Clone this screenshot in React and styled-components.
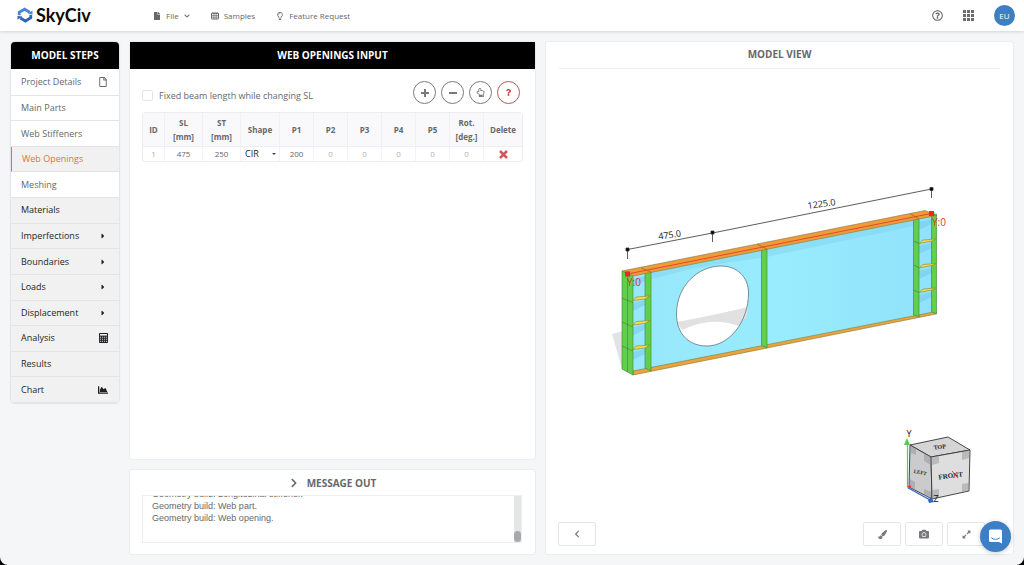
import React from "react";
import styled, { createGlobalStyle, css } from "styled-components";
import {
  FaFile,
  FaRegFile,
  FaChevronDown,
  FaChevronLeft,
  FaChevronRight,
  FaRegLightbulb,
  FaChartArea,
  FaRegHandPointUp,
  FaQuestion,
  FaCaretRight,
  FaPaintBrush,
  FaCamera,
  FaExpandAlt,
  FaRegQuestionCircle,
} from "react-icons/fa";

const GlobalStyle = createGlobalStyle`
  *, *::before, *::after { box-sizing: border-box; }
  body {
    margin: 0;
    background: #000;
    color: #66686b;
    font-family: "Open Sans", "Noto Sans", sans-serif;
    font-size: 9px;
    line-height: 14px;
  }
  button, input, select { font: inherit; color: inherit; }
  a { color: inherit; text-decoration: none; }
`;

const Page = styled.div`
  min-height: 100vh;
  display: flex;
  flex-direction: column;
  background: #f5f6f8;
  border-radius: 0 0 8px 8px;
`;

const Header = styled.header`
  height: 31px;
  padding: 0 9px 0 17px;
  display: flex;
  align-items: center;
  background: #fff;
  box-shadow: 0 1px 3px rgba(0, 0, 0, 0.14);
`;

const Brand = styled.a`
  width: 136px;
  display: flex;
  align-items: center;
  gap: 3px;
  padding-bottom: 2px;
  color: #0b0b0b;
  font-family: Lato, sans-serif;
  font-size: 18px;
  font-weight: 700;
  line-height: 24px;
`;

const TopNav = styled.nav`
  flex: 1;
  display: flex;
  align-items: center;
  gap: 21px;
  font-size: 8px;
`;

const NavLink = styled.a`
  display: flex;
  align-items: center;
  gap: 5px;
`;

const HeaderTools = styled.div`
  display: flex;
  align-items: center;
  gap: 20px;
`;

const PlainButton = styled.button`
  padding: 0;
  border: 0;
  background: none;
  display: flex;
  cursor: pointer;
`;

const Avatar = styled.button`
  width: 21px;
  height: 21px;
  padding: 0;
  border: 0;
  border-radius: 50%;
  background: #3d7fc1;
  color: #fff;
  font-size: 8px;
`;

const Workspace = styled.main`
  flex: 1;
  display: grid;
  grid-template-columns: 108px minmax(0, 405fr) minmax(0, 467fr);
  gap: 11px;
  padding: 11px;
`;

const Card = styled.section`
  background: #fff;
  border-radius: 2px;
  box-shadow: 0 0 2px rgba(0, 0, 0, 0.14);
  display: flex;
  flex-direction: column;
  ${(p) => p.$grow && css`flex: 1;`}
`;

const Column = styled.div`
  display: flex;
  flex-direction: column;
  gap: 11px;
`;

const PanelTitle = styled.h2`
  margin: 0;
  height: ${(p) => (p.$compact ? 25 : 27)}px;
  padding-bottom: ${(p) => (p.$compact ? 0 : 2)}px;
  display: flex;
  align-items: center;
  justify-content: center;
  gap: 8px;
  font-size: 10px;
  font-weight: 700;
  ${(p) =>
    p.$dark &&
    css`
      background: #000;
      color: #fff;
    `}
`;

const Steps = styled.nav`
  align-self: start;
  border-radius: 4px;
  overflow: hidden;
  box-shadow: 0 0 2px rgba(0, 0, 0, 0.25);
`;

const StepList = styled.ul`
  margin: 0;
  padding: 1px 0 0;
  list-style: none;
  display: grid;
  grid-template-rows: repeat(13, minmax(0, 1fr));
  height: 334px;
  background: #fff;
`;

const Step = styled.a`
  height: 100%;
  padding: 0 11px 0 10px;
  display: flex;
  align-items: center;
  justify-content: space-between;
  border-bottom: 1px solid #e3e4e6;
  background: ${(p) => (p.$sub ? "#fff" : "#f1f1f2")};
  color: ${(p) => (p.$sub ? "#66686b" : "#1d1e20")};
  ${(p) =>
    p.$active &&
    css`
      background: #f2f1f1;
      color: #dd7443;
      border-left: 1px solid #dd7443;
    `}
`;

const StepIcon = styled.span`
  width: 10px;
  display: flex;
  justify-content: center;
`;

const InputBody = styled.div`
  flex: 1;
  padding: 12px 13px 12px 12px;
`;

const Toolbar = styled.div`
  display: flex;
  align-items: center;
  justify-content: space-between;
  padding-right: 2px;
  margin-bottom: 8px;
`;

const CheckLabel = styled.label`
  display: flex;
  align-items: center;
  gap: 6px;
  padding-top: 6px;
`;

const CheckBox = styled.input`
  appearance: none;
  width: 11px;
  height: 11px;
  margin: 0;
  border: 1px solid #e4e5e8;
  border-radius: 2px;
  background: #fff;
`;

const RoundGroup = styled.div`
  display: flex;
  gap: 5px;
`;

const RoundButton = styled.button`
  width: 23px;
  height: 23px;
  padding: 0;
  display: flex;
  align-items: center;
  justify-content: center;
  border: 1px solid currentColor;
  border-radius: 50%;
  background: #fff;
  color: ${(p) => (p.$danger ? "#cc4a50" : "#77797c")};
`;

const Table = styled.table`
  width: 100%;
  table-layout: fixed;
  border-collapse: separate;
  border-spacing: 0;
  border: 1px solid #ededf0;
  border-radius: 3px;
  text-align: center;
`;

const HeadCell = styled.th`
  height: 34px;
  padding: 0;
  background: #f9f9fb;
  border-bottom: 1px solid #efeff2;
  border-right: 1px solid #f1f1f4;
  font-size: 8px;
  &:last-child { border-right: 0; }
`;

const Cell = styled.td`
  height: 14px;
  padding: 0;
  border-right: 1px solid #f4f4f6;
  line-height: 14px;
  font-size: 8px;
  color: ${(p) => (p.$muted ? "#b0b1b4" : "#66686b")};
  &:last-child { border-right: 0; }
`;

const ShapeBox = styled.span`
  display: flex;
  align-items: center;
  padding: 0 3px 0 4px;
  color: #222;
`;

const ShapeSelect = styled.select`
  appearance: none;
  flex: 1;
  min-width: 0;
  height: 14px;
  padding: 0;
  border: 0;
  background: none;
  font-size: 9px;
`;

const DeleteButton = styled(PlainButton)`
  margin: 0 auto;
  color: #cd5a5e;
`;

const MessageBody = styled.div`
  margin: 0 13px 11px 12px;
  height: 48px;
  display: flex;
  border: 1px solid #eeeef0;
`;

const MessageLog = styled.div`
  flex: 1;
  padding: 0 9px 18px;
  overflow: hidden;
  display: flex;
  flex-direction: column;
  justify-content: flex-end;
  font-family: "Liberation Sans", sans-serif;
  font-size: 9px;
  line-height: 12px;
`;

const LogLine = styled.div`
  flex: none;
`;

const ScrollTrack = styled.div`
  width: 7px;
  display: flex;
  align-items: flex-end;
  background: #e4e5e7;
`;

const ScrollThumb = styled.div`
  width: 7px;
  height: 11px;
  border-radius: 4px;
  background: #a8a9ab;
`;

const ViewTitle = styled(PanelTitle)`
  margin: 0 13px;
  border-bottom: 1px solid #efeff1;
`;

const ModelCanvas = styled.svg`
  display: block;
  width: 100%;
  flex: 1;
  min-height: 0;
`;

const ViewFooter = styled.div`
  display: flex;
  justify-content: space-between;
  padding: 0 28px 8px 12px;
`;

const ViewTools = styled.div`
  display: flex;
  gap: 4px;
`;

const ViewButton = styled.button`
  width: 38px;
  height: 24px;
  padding: 0;
  display: flex;
  align-items: center;
  justify-content: center;
  border: 1px solid #e6e6e9;
  border-radius: 2px;
  background: #fff;
  color: #77797c;
`;

const ChatButton = styled.button`
  position: fixed;
  right: 13px;
  bottom: 13px;
  width: 31px;
  height: 31px;
  padding: 0;
  display: flex;
  align-items: center;
  justify-content: center;
  border: 0;
  border-radius: 50%;
  background: #3d7fc4;
  box-shadow: 0 1px 5px rgba(0, 0, 0, 0.2);
`;

const Logo = () => (
  <svg width="16" height="18" viewBox="0 0 16 18" aria-hidden="true">
    <path d="M2.200 9.200V6.400L7.600 3.200L12.600 6.200" fill="none" stroke="#4a86cf" strokeWidth="2.800" />
    <path d="M13.800 8.800V11.800L8.400 15L3.400 12" fill="none" stroke="#2f63b3" strokeWidth="2.800" />
    <path d="M15.500 4.500V8.200L10.500 7.600Z" fill="#4a86cf" />
    <path d="M0.500 13.700V10L5.500 10.600Z" fill="#2f63b3" />
  </svg>
);

const GridIcon = () => (
  <svg width="11" height="11" viewBox="0 0 11 11" fill="#6b6d70" aria-hidden="true">
    {[0, 4, 8].map((y) => [0, 4, 8].map((x) => <rect key={`${x}-${y}`} x={x} y={y} width="3" height="3" />))}
  </svg>
);

const TableIcon = () => (
  <svg width="8" height="8" viewBox="0 0 8 8" fill="none" stroke="currentColor" aria-hidden="true">
    <rect x="0.500" y="1" width="7" height="6" rx="0.500" />
    <path d="M0.500 1.500H7.500M0.500 3.400H7.500M0.500 5.200H7.500M2.900 1V7M5.200 1V7" strokeWidth="0.700" />
  </svg>
);

const CalculatorIcon = () => (
  <svg width="9" height="10" viewBox="0 0 9 10" aria-hidden="true">
    <rect width="9" height="10" rx="0.800" fill="currentColor" />
    <rect x="1" y="1" width="7" height="1.600" fill="#f1f1f2" />
    <path d="M0.800 4.200H8.200M0.800 6.200H8.200M0.800 8.300H8.200" stroke="#f1f1f2" strokeWidth="0.900" strokeDasharray="1.200 0.850" />
  </svg>
);

const SignIcon = ({ plus }) => (
  <svg width="8" height="8" viewBox="0 0 8 8" stroke="currentColor" strokeWidth="2" aria-hidden="true">
    <path d={plus ? "M0 4H8M4 0V8" : "M0 4H8"} />
  </svg>
);

const CrossIcon = () => (
  <svg width="9" height="9" viewBox="0 0 9 9" aria-hidden="true">
    <path d="M1 1L8 8M8 1L1 8" stroke="currentColor" strokeWidth="2.600" />
  </svg>
);

const steps = [
  { name: "Project Details", sub: true, icon: <FaRegFile size={10} /> },
  { name: "Main Parts", sub: true },
  { name: "Web Stiffeners", sub: true },
  { name: "Web Openings", sub: true, active: true },
  { name: "Meshing", sub: true },
  { name: "Materials" },
  { name: "Imperfections", icon: <FaCaretRight size={8} /> },
  { name: "Boundaries", icon: <FaCaretRight size={8} /> },
  { name: "Loads", icon: <FaCaretRight size={8} /> },
  { name: "Displacement", icon: <FaCaretRight size={8} /> },
  { name: "Analysis", icon: <CalculatorIcon /> },
  { name: "Results" },
  { name: "Chart", icon: <FaChartArea size={10} /> },
];

const columns = [
  { label: "ID", width: 22 },
  { label: "SL", unit: "[mm]", width: 38 },
  { label: "ST", unit: "[mm]", width: 38 },
  { label: "Shape", width: 39 },
  { label: "P1", width: 34 },
  { label: "P2", width: 34 },
  { label: "P3", width: 34 },
  { label: "P4", width: 34 },
  { label: "P5", width: 34 },
  { label: "Rot.", unit: "[deg.]", width: 34 },
  { label: "Delete", width: 38 },
];

const HOLE =
  "M748.500 293C748.500 277 737 266 721 266C698 266 676.500 286 676.500 314C676.500 333 688 346 707 346C729 346 748.500 322 748.500 293Z";

const Beam = () => (
  <g strokeLinejoin="round">
    <path d="M612 334L634 328V375L622 369Z" fill="#e3e3e4" />
    <path d={`M633 272L935 212V312L633 372Z${HOLE}`} fill="url(#web)" fillRule="evenodd" />
    <path d="M651 272L914 220V226L761 258Q700 265 651 279Z" fill="#7fd0ee" opacity="0.450" />
    <path d="M677 322Q715 315 748 307L747 316L738 326Q712 316 682 330Z" fill="#e1e1e2" />
    <path d={HOLE} fill="none" stroke="#63757b" strokeWidth="0.800" />
    <g fill="#78c9ea" opacity="0.550">
      {[279, 303, 327.500, 352].map((y) => (
        <path key={y} d={`M633 ${y}L645 ${y - 3}V${y + 2}L633 ${y + 8}Z`} />
      ))}
      {[222, 246, 271, 295].map((y) => (
        <path key={y} d={`M919 ${y}L932 ${y - 3}V${y + 2}L919 ${y + 8}Z`} />
      ))}
    </g>
    <path d="M633 371L936 311.500V314L633 375Z" fill="#eda23c" stroke="#7b7a35" strokeWidth="0.600" />
    <g fill="#60d04c" stroke="#3f7f36" strokeWidth="0.600">
      <path d="M645 273L651 272V371L645 368Z" />
      <path d="M761.500 250L767 248V348L761.500 345.500Z" />
      <path d="M913.500 219L919 218V317L913.500 315Z" />
      <path d="M931.500 215L936.500 214V314L931.500 311.500Z" />
      <path d="M622 271L633 276V375L622 369Z" />
      <path d="M627.500 274V372M622 298L633 302.500M622 322L633 327M622 346L633 351" fill="none" />
      <path d="M913.500 241L919 243.500M913.500 265L919 267.500M913.500 290L919 292.500" fill="none" />
    </g>
    <path d="M622 271L925 210.500L936.500 215.500L633 276Z" fill="#ee9b3b" stroke="#7b7a35" strokeWidth="0.600" />
    <g fill="#f0dc4c" stroke="#8a8434" strokeWidth="0.600">
      {[298, 322.500, 347].map((y) => (
        <path key={y} d={`M633 ${y + 2.500}L645 ${y + 1}L650 ${y - 2}L636 ${y - 1}Z`} />
      ))}
      {[241, 265.500, 290].map((y) => (
        <path key={y} d={`M919 ${y + 2.500}L932 ${y}L936 ${y - 2}L923 ${y - 1}Z`} />
      ))}
    </g>
    <path d="M641 268L651 272M757 244L767 249M910 213.500L919 219" stroke="#7a6a2d" strokeWidth="0.700" />
    <path d="M627.500 274L931 213.500" stroke="#e5401e" strokeWidth="0.900" />
    <path d="M625 271.500h5v5h-5zM929 211h5v5h-5z" fill="#ee2724" />
  </g>
);

const Dimensions = () => (
  <g fill="#000" stroke="#333" strokeWidth="0.800">
    <path d="M627.500 249.500L712.500 233L931.500 189M627.500 249.500V259M712.500 233V242M931.500 189V198" fill="none" />
    <path d="M626 248h3v3h-3zM711 231h3v3h-3zM930 187.500h3v3h-3z" />
  </g>
);

const ViewCube = () => (
  <g>
    <g stroke="#333" strokeWidth="0.900" strokeLinejoin="round">
      <path d="M910 445L948 437L970 450L931 457Z" fill="#d5d5d6" />
      <path d="M910 445L931 457L932 499L909 487Z" fill="#cbcbcd" />
      <path d="M931 457L970 450L969 491L932 499Z" fill="#dededf" />
    </g>
    <path
      d="M932 457L939 456V463L932 465ZM962 452L969 450V458L962 460ZM932 490L939 489V497L932 499ZM962 484L969 483V491L962 492ZM911 446L916 449V455L911 453ZM924 453L931 457V465L924 461ZM910 479L915 482V489L910 487ZM924 489L931 492V498L924 495Z"
      fill="#8e8e93"
      opacity="0.450"
    />
    <path d="M907.500 487V443" stroke="#58c957" strokeWidth="1.200" />
    <path d="M907 438L910 445H904Z" fill="#58c957" />
    <path d="M907.500 487.500L930 500" stroke="#2e66c8" strokeWidth="1.400" />
    <path d="M928 500L931 497L934 502L929 503Z" fill="#2e66c8" />
    <path d="M908 487L911 486" stroke="#e33" strokeWidth="1.400" />
  </g>
);

const SceneText = styled.text`
  font-family: "Open Sans", sans-serif;
  font-size: ${(p) => p.$size || 9}px;
  fill: ${(p) => p.$color || "#111"};
  text-anchor: middle;
`;

const CubeText = styled.text`
  font-family: "Liberation Serif", serif;
  font-size: ${(p) => p.$size}px;
  font-weight: 700;
  fill: #222;
  text-anchor: middle;
`;

const ModelScene = () => (
  <ModelCanvas viewBox="546 69 467 453" role="img" aria-label="Beam model">
    <defs>
      <linearGradient id="web" x1="0" y1="0" x2="1" y2="0">
        <stop offset="0" stopColor="#97e7fb" />
        <stop offset="0.500" stopColor="#98ecfc" />
        <stop offset="1" stopColor="#8fe2fb" />
      </linearGradient>
    </defs>
    <Beam />
    <Dimensions />
    <SceneText x="670" y="238" transform="rotate(-8 670 238)">475.0</SceneText>
    <SceneText x="822" y="207" transform="rotate(-8 822 207)">1225.0</SceneText>
    <SceneText x="634" y="286" $size={10} $color="#c9402b">Y:0</SceneText>
    <SceneText x="939" y="226" $size={10} $color="#e0342b">Y:0</SceneText>
    <ViewCube />
    <SceneText x="909" y="437">Y</SceneText>
    <SceneText x="936" y="502">Z</SceneText>
    <CubeText x="940" y="449" $size={6} transform="rotate(-8 940 449)">TOP</CubeText>
    <CubeText x="920" y="474" $size={5} transform="rotate(12 920 474)">LEFT</CubeText>
    <CubeText x="951" y="478" $size={7} transform="rotate(-7 951 478)">FRONT</CubeText>
    <path d="M952 471L958 478M957 472L953 478" stroke="#d33" strokeWidth="0.900" />
  </ModelCanvas>
);

export default function App() {
  return (
    <Page>
      <GlobalStyle />
      <Header>
        <Brand href="#"><Logo />SkyCiv</Brand>
        <TopNav>
          <NavLink href="#"><FaFile size={8} />File<FaChevronDown size={6} /></NavLink>
          <NavLink href="#"><TableIcon />Samples</NavLink>
          <NavLink href="#"><FaRegLightbulb size={8} />Feature Request</NavLink>
        </TopNav>
        <HeaderTools>
          <PlainButton aria-label="Help"><FaRegQuestionCircle size={11} /></PlainButton>
          <PlainButton aria-label="Apps"><GridIcon /></PlainButton>
          <Avatar>EU</Avatar>
        </HeaderTools>
      </Header>
      <Workspace>
        <Steps>
          <PanelTitle $dark>MODEL STEPS</PanelTitle>
          <StepList>
            {steps.map((s) => (
              <li key={s.name}>
                <Step href="#" $sub={s.sub} $active={s.active}>
                  {s.name}
                  {s.icon && <StepIcon>{s.icon}</StepIcon>}
                </Step>
              </li>
            ))}
          </StepList>
        </Steps>
        <Column>
          <Card $grow>
            <PanelTitle $dark>WEB OPENINGS INPUT</PanelTitle>
            <InputBody>
              <Toolbar>
                <CheckLabel>
                  <CheckBox type="checkbox" />
                  Fixed beam length while changing SL
                </CheckLabel>
                <RoundGroup>
                  <RoundButton aria-label="Add"><SignIcon plus /></RoundButton>
                  <RoundButton aria-label="Remove"><SignIcon /></RoundButton>
                  <RoundButton aria-label="Pick"><FaRegHandPointUp size={9} /></RoundButton>
                  <RoundButton aria-label="Help" $danger><FaQuestion size={7} /></RoundButton>
                </RoundGroup>
              </Toolbar>
              <Table>
                <colgroup>
                  {columns.map((c) => <col key={c.label} width={c.width} />)}
                </colgroup>
                <thead>
                  <tr>
                    {columns.map((c) => (
                      <HeadCell key={c.label}>{c.label}{c.unit && <><br />{c.unit}</>}</HeadCell>
                    ))}
                  </tr>
                </thead>
                <tbody>
                  <tr>
                    <Cell $muted>1</Cell>
                    <Cell>475</Cell>
                    <Cell>250</Cell>
                    <Cell>
                      <ShapeBox>
                        <ShapeSelect aria-label="Shape"><option>CIR</option></ShapeSelect>
                        <svg width="4" height="2" viewBox="0 0 4 2" aria-hidden="true"><path d="M0 0h4L2 2z" fill="#444" /></svg>
                      </ShapeBox>
                    </Cell>
                    <Cell>200</Cell>
                    {["P2", "P3", "P4", "P5", "Rot"].map((k) => <Cell key={k} $muted>0</Cell>)}
                    <Cell><DeleteButton aria-label="Delete row"><CrossIcon /></DeleteButton></Cell>
                  </tr>
                </tbody>
              </Table>
            </InputBody>
          </Card>
          <Card>
            <PanelTitle $compact><FaChevronRight size={10} />MESSAGE OUT</PanelTitle>
            <MessageBody>
              <MessageLog role="log">
                <LogLine>Geometry build: Longitudinal stiffener.</LogLine>
                <LogLine>Geometry build: Web part.</LogLine>
                <LogLine>Geometry build: Web opening.</LogLine>
              </MessageLog>
              <ScrollTrack><ScrollThumb /></ScrollTrack>
            </MessageBody>
          </Card>
        </Column>
        <Card>
          <ViewTitle>MODEL VIEW</ViewTitle>
          <ModelScene />
          <ViewFooter>
            <ViewButton aria-label="Collapse"><FaChevronLeft size={8} /></ViewButton>
            <ViewTools>
              <ViewButton aria-label="Paint"><FaPaintBrush size={9} /></ViewButton>
              <ViewButton aria-label="Screenshot"><FaCamera size={10} /></ViewButton>
              <ViewButton aria-label="Expand"><FaExpandAlt size={9} /></ViewButton>
            </ViewTools>
          </ViewFooter>
        </Card>
      </Workspace>
      <ChatButton aria-label="Chat">
        <svg width="15" height="15" viewBox="0 0 15 15" aria-hidden="true">
          <path d="M2.500 0.500H12.500Q14 0.500 14 2V14.500L11 13H2.500Q1 13 1 11.500V2Q1 0.500 2.500 0.500Z" fill="#fff" />
          <path d="M3.500 9Q7.500 12 11.500 9" fill="none" stroke="#3d7fc4" strokeLinecap="round" />
        </svg>
      </ChatButton>
    </Page>
  );
}
